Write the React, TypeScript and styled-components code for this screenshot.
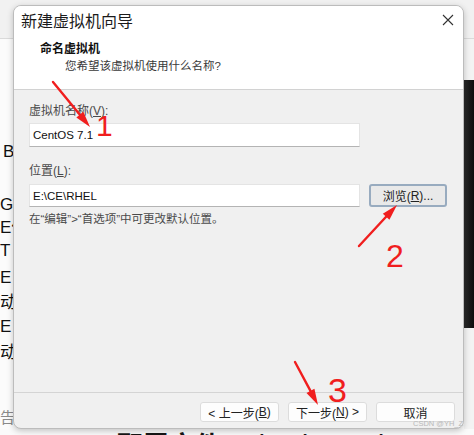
import styled, { createGlobalStyle } from "styled-components";

const UI_FONT = `"Liberation Sans", "Noto Sans CJK SC", sans-serif`;
const CJK_FONT = `"Noto Sans CJK SC", "Liberation Sans", sans-serif`;

const GlobalStyle = createGlobalStyle`
  html, body {
    margin: 0;
    padding: 0;
  }
  body {
    width: 474px;
    height: 435px;
    overflow: hidden;
    background: #fafafa;
    font-family: ${UI_FONT};
  }
`;

const Page = styled.div`
  position: relative;
  width: 474px;
  height: 435px;
  overflow: hidden;
`;

/* the page behind the wizard */
const Backdrop = styled.div`
  display: flex;
  flex-direction: column;
  height: 100%;
`;

const TopBar = styled.div`
  height: 38px;
  flex-shrink: 0;
  background: #f1f1f1;
  border-bottom: 1px solid #dadada;
`;

const Middle = styled.div`
  display: flex;
  height: 390px;
  flex-shrink: 0;
`;

const LeftList = styled.div`
  flex: 1;
  display: flex;
  flex-direction: column;
  background: #fbfbfb;
  font-family: ${UI_FONT};
  font-size: 17px;
  line-height: 22px;
  color: #111;
  white-space: nowrap;
`;

const ListRow = styled.div<{ $gap: number; $x: number; $muted?: boolean }>`
  margin-top: ${(p) => p.$gap}px;
  padding-left: ${(p) => p.$x}px;
  color: ${(p) => (p.$muted ? "#8a8a8a" : "#111")};
  font-size: ${(p) => (p.$muted ? 15 : 17)}px;
`;

const RightStrip = styled.div`
  width: 10px;
  display: flex;
  flex-direction: column;
  background: #f3f3f3;
`;

const StripSpacer = styled.div`
  height: 41px;
`;

const DarkBlock = styled.div`
  height: 248px;
  background: linear-gradient(90deg, #2a2a2a, #0c0c0c);
`;

const BottomBar = styled.div`
  flex: 1;
  overflow: hidden;
  padding-left: 117px;
  background: #fafafa;
`;

const BottomText = styled.div`
  margin-top: 2px;
  font-family: ${CJK_FONT};
  font-weight: bold;
  font-size: 26px;
  line-height: 26px;
  color: #151515;
  white-space: nowrap;
`;

/* the wizard window */
const Dialog = styled.div`
  position: absolute;
  left: 13px;
  top: 5px;
  width: 451px;
  height: 424px;
  box-sizing: border-box;
  display: flex;
  flex-direction: column;
  background: #f0f0f0;
  border: 1px solid #bcbcbc;
  border-radius: 8px;
  overflow: hidden;
  box-shadow: 0 2px 6px rgba(0, 0, 0, 0.22);
  font-family: ${UI_FONT};
`;

const Header = styled.div`
  height: 84px;
  box-sizing: border-box;
  background: #ffffff;
  border-bottom: 1px solid #d2d2d2;
`;

const TitleBar = styled.div`
  height: 28px;
  display: flex;
  align-items: center;
  justify-content: space-between;
  padding: 0 9px 0 7px;
`;

const Title = styled.div`
  font-family: ${CJK_FONT};
  font-size: 16px;
  color: #1b1b1b;
`;

const CloseButton = styled.div`
  width: 12px;
  height: 12px;
  display: flex;
`;

const Heading = styled.div`
  padding-left: 26px;
`;

const HeadingTitle = styled.div`
  margin-top: 6px;
  font-family: ${CJK_FONT};
  font-size: 12px;
  font-weight: bold;
  line-height: 16px;
  color: #111;
`;

const HeadingSub = styled.div`
  margin-top: 2px;
  padding-left: 25px;
  font-size: 11.5px;
  line-height: 16px;
  color: #3a3a3a;
`;

const Body = styled.div`
  flex: 1;
  padding: 0 16px 0 15px;
`;

const FieldLabel = styled.div<{ $gap: number }>`
  margin-top: ${(p) => p.$gap}px;
  font-size: 12px;
  line-height: 16px;
  color: #4a4a4a;
`;

const TextField = styled.input<{ $h: number }>`
  display: block;
  box-sizing: border-box;
  width: 331px;
  height: ${(p) => p.$h}px;
  margin: 0;
  padding: 0 3px;
  border: 1px solid #e4e4e4;
  border-bottom-color: #b4b4b4;
  background: #ffffff;
  font-family: ${UI_FONT};
  font-size: 11.5px;
  color: #111;
  outline: none;
`;

const FieldRow = styled.div`
  display: flex;
  gap: 9px;
  margin-top: 5px;
`;

const BrowseButton = styled.div`
  width: 78px;
  height: 23px;
  box-sizing: border-box;
  display: flex;
  align-items: center;
  justify-content: center;
  border: 2px solid #98abbf;
  border-radius: 3px;
  background: #e9e9e9;
  font-size: 12px;
  color: #222;
`;

const Hint = styled.div`
  margin-top: 4px;
  font-size: 11.5px;
  line-height: 16px;
  color: #4a4a4a;
`;

const Footer = styled.div`
  height: 36px;
  box-sizing: border-box;
  border-top: 1px solid #d4d4d4;
  display: flex;
  justify-content: flex-end;
  align-items: flex-start;
  gap: 9px;
  padding: 9px 8px 0 0;
`;

const WizardButton = styled.div`
  width: 79px;
  height: 20px;
  box-sizing: border-box;
  display: flex;
  align-items: center;
  justify-content: center;
  border: 1px solid #dcdcdc;
  border-radius: 3px;
  background: #fdfdfd;
  font-size: 12px;
  color: #222;
  white-space: pre;
`;

/* red annotations drawn on top of the screenshot */
const Overlay = styled.svg`
  position: absolute;
  left: 0;
  top: 0;
  width: 474px;
  height: 435px;
  pointer-events: none;
`;

const Mark = styled.span<{ $x: number; $y: number; $size: number }>`
  position: absolute;
  left: ${(p) => p.$x}px;
  top: ${(p) => p.$y}px;
  font-family: "Liberation Sans", sans-serif;
  font-size: ${(p) => p.$size}px;
  line-height: 1;
  color: #f01e1e;
`;

const Watermark = styled.span`
  position: absolute;
  left: 413px;
  top: 420px;
  font-family: "Liberation Sans", sans-serif;
  font-size: 7.5px;
  line-height: 8px;
  color: #b9b9b9;
  white-space: nowrap;
`;

type ArrowProps = { x1: number; y1: number; x2: number; y2: number };

function Arrow({ x1, y1, x2, y2 }: ArrowProps) {
  const dx = x2 - x1;
  const dy = y2 - y1;
  const len = Math.hypot(dx, dy);
  const ux = dx / len;
  const uy = dy / len;
  const headLen = 16;
  const headW = 4.5;
  const bx = x2 - ux * headLen;
  const by = y2 - uy * headLen;
  const head = `${x2},${y2} ${bx - uy * headW},${by + ux * headW} ${bx + uy * headW},${by - ux * headW}`;
  return (
    <g>
      <line
        x1={x1}
        y1={y1}
        x2={bx + ux * 2}
        y2={by + uy * 2}
        stroke="#f01e1e"
        strokeWidth={2.4}
        strokeLinecap="round"
      />
      <polygon points={head} fill="#f01e1e" />
    </g>
  );
}

function App() {
  return (
    <Page>
      <GlobalStyle />
      <Backdrop>
        <TopBar />
        <Middle>
          <LeftList>
            <ListRow $gap={102} $x={3}>B 设置</ListRow>
            <ListRow $gap={31} $x={0}>GB 位</ListRow>
            <ListRow $gap={1} $x={0}>E位置</ListRow>
            <ListRow $gap={1} $x={0}>T 类型</ListRow>
            <ListRow $gap={5} $x={0}>E 模式</ListRow>
            <ListRow $gap={3} $x={0}>动模式</ListRow>
            <ListRow $gap={2} $x={0}>E 模式</ListRow>
            <ListRow $gap={4} $x={0}>动模式</ListRow>
            <ListRow $gap={43} $x={0} $muted>告这个</ListRow>
          </LeftList>
          <RightStrip>
            <StripSpacer />
            <DarkBlock />
          </RightStrip>
        </Middle>
        <BottomBar>
          <BottomText>配置文件: E:\CE\RHEL\CentOS 7.0.vmx</BottomText>
        </BottomBar>
      </Backdrop>

      <Dialog>
        <Header>
          <TitleBar>
            <Title>新建虚拟机向导</Title>
            <CloseButton>
              <svg width="12" height="12" viewBox="0 0 12 12">
                <path d="M1 1 L11 11 M11 1 L1 11" stroke="#333" strokeWidth="1.1" fill="none" />
              </svg>
            </CloseButton>
          </TitleBar>
          <Heading>
            <HeadingTitle>命名虚拟机</HeadingTitle>
            <HeadingSub>您希望该虚拟机使用什么名称?</HeadingSub>
          </Heading>
        </Header>

        <Body>
          <FieldLabel $gap={13}>
            虚拟机名称(<u>V</u>):
          </FieldLabel>
          <TextField $h={24} style={{ marginTop: 4 }} readOnly value="CentOS 7.1" />
          <FieldLabel $gap={16}>
            位置(<u>L</u>):
          </FieldLabel>
          <FieldRow>
            <TextField $h={23} readOnly value="E:\CE\RHEL" />
            <BrowseButton>
              浏览(<u>R</u>)...
            </BrowseButton>
          </FieldRow>
          <Hint>在“编辑”&gt;“首选项”中可更改默认位置。</Hint>
        </Body>

        <Footer>
          <WizardButton>
            {"< 上一步("}
            <u>B</u>)
          </WizardButton>
          <WizardButton>
            下一步(<u>N</u>
            {") >"}
          </WizardButton>
          <WizardButton>取消</WizardButton>
        </Footer>
      </Dialog>

      <Overlay viewBox="0 0 474 435">
        <Arrow x1={53} y1={82} x2={90} y2={127} />
        <Arrow x1={359} y1={246} x2={397} y2={205} />
        <Arrow x1={295} y1={362} x2={318} y2={405} />
      </Overlay>
      <Mark $x={96} $y={111} $size={30}>1</Mark>
      <Mark $x={386} $y={240} $size={32}>2</Mark>
      <Mark $x={328} $y={373} $size={34}>3</Mark>
      <Watermark>CSDN @YH_Z</Watermark>
    </Page>
  );
}

export default App;
